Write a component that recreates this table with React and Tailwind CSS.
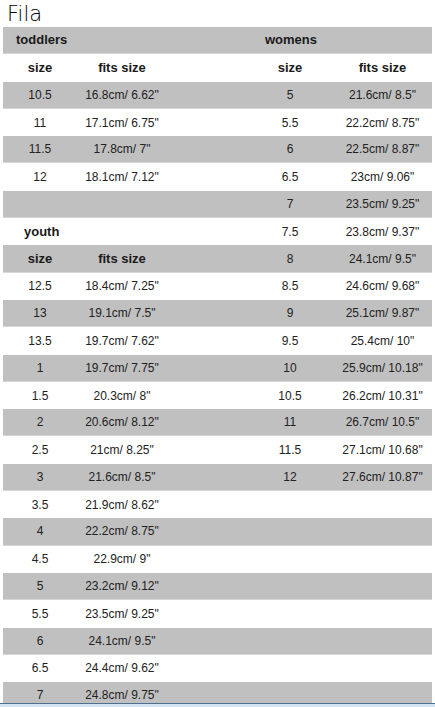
import React from "react";

const left = [
  { t: "head", label: "toddlers" },
  { t: "cols" },
  ["10.5", "16.8cm/ 6.62\""],
  ["11", "17.1cm/ 6.75\""],
  ["11.5", "17.8cm/ 7\""],
  ["12", "18.1cm/ 7.12\""],
  null,
  { t: "head2", label: "youth" },
  { t: "cols" },
  ["12.5", "18.4cm/ 7.25\""],
  ["13", "19.1cm/ 7.5\""],
  ["13.5", "19.7cm/ 7.62\""],
  ["1", "19.7cm/ 7.75\""],
  ["1.5", "20.3cm/ 8\""],
  ["2", "20.6cm/ 8.12\""],
  ["2.5", "21cm/ 8.25\""],
  ["3", "21.6cm/ 8.5\""],
  ["3.5", "21.9cm/ 8.62\""],
  ["4", "22.2cm/ 8.75\""],
  ["4.5", "22.9cm/ 9\""],
  ["5", "23.2cm/ 9.12\""],
  ["5.5", "23.5cm/ 9.25\""],
  ["6", "24.1cm/ 9.5\""],
  ["6.5", "24.4cm/ 9.62\""],
  ["7", "24.8cm/ 9.75\""],
];

const right = [
  { t: "head", label: "womens" },
  { t: "cols" },
  ["5", "21.6cm/ 8.5\""],
  ["5.5", "22.2cm/ 8.75\""],
  ["6", "22.5cm/ 8.87\""],
  ["6.5", "23cm/ 9.06\""],
  ["7", "23.5cm/ 9.25\""],
  ["7.5", "23.8cm/ 9.37\""],
  ["8", "24.1cm/ 9.5\""],
  ["8.5", "24.6cm/ 9.68\""],
  ["9", "25.1cm/ 9.87\""],
  ["9.5", "25.4cm/ 10\""],
  ["10", "25.9cm/ 10.18\""],
  ["10.5", "26.2cm/ 10.31\""],
  ["11", "26.7cm/ 10.5\""],
  ["11.5", "27.1cm/ 10.68\""],
  ["12", "27.6cm/ 10.87\""],
];

function Pair({ item, w1, w2 }) {
  if (!item) {
    return (
      <>
        <div className={w1} />
        <div className={w2} />
      </>
    );
  }
  if (item.t === "cols") {
    return (
      <>
        <div className={`${w1} text-center font-bold text-[13px] text-[#1a1a1a]`}>size</div>
        <div className={`${w2} text-center font-bold text-[13px] text-[#1a1a1a]`}>fits size</div>
      </>
    );
  }
  return (
    <>
      <div className={`${w1} text-center text-[12px] text-[#222]`}>{item[0]}</div>
      <div className={`${w2} text-center text-[12px] text-[#222]`}>{item[1]}</div>
    </>
  );
}

export default function App() {
  return (
    <div
      className="relative h-[707px] w-[435px] overflow-hidden bg-white"
      style={{ fontFamily: '"Liberation Sans", Arial, sans-serif' }}
    >
      <div
        className="h-[27px] pl-[7px] pt-[3px] text-[21px] leading-[22px] text-black"
        style={{ fontFamily: '"DejaVu Sans", sans-serif', fontWeight: 300 }}
      >
        Fila
      </div>
      <div className="flex flex-col">
        {left.map((l, i) => {
          const r = right[i];
          const gray = i % 2 === 0;
          const lHead = l && (l.t === "head" || l.t === "head2");
          const rHead = r && r.t === "head";
          return (
            <div
              key={i}
              className={`ml-[3px] flex h-[27.3px] w-[429px] shrink-0 items-center ${gray ? "bg-[#c0c0c0] border-b border-[#d6d6d6]" : "bg-white"}`}
            >
              <div className="flex w-[164px] items-center">
                {lHead ? (
                  <div className={`font-bold text-[13px] text-[#1a1a1a] ${l.t === "head" ? "pl-[13px]" : "pl-[21px]"}`}>
                    {l.label}
                  </div>
                ) : (
                  <Pair item={l} w1="w-[74px]" w2="w-[90px]" />
                )}
              </div>
              <div className="w-[80px]" />
              <div className="flex w-[185px] items-center">
                {rHead ? (
                  <div className="pl-[18px] font-bold text-[13px] text-[#1a1a1a]">{r.label}</div>
                ) : r ? (
                  <Pair item={r} w1="w-[86px]" w2="w-[99px]" />
                ) : null}
              </div>
            </div>
          );
        })}
      </div>
      <div className="absolute bottom-0 left-0 right-0 h-[4px] border-t border-[#4f6f8f] bg-[#d5e4f2]" />
    </div>
  );
}
